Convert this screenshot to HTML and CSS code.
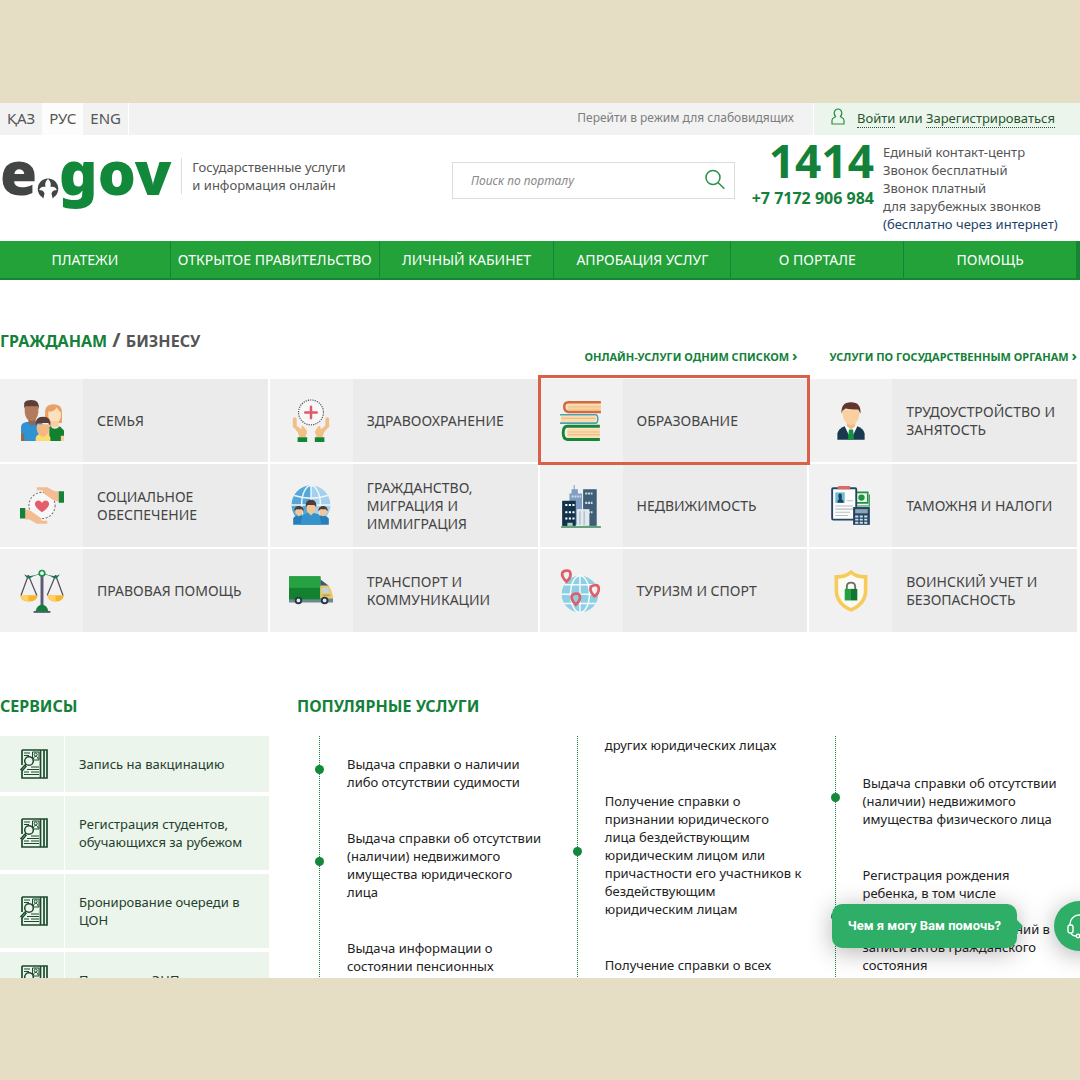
FILE: index.html
```html
<!DOCTYPE html>
<html lang="ru">
<head>
    <meta charset="UTF-8">
    <meta name="viewport" content="width=device-width, initial-scale=1.0">
    <title>Электронное правительство</title>
    <link rel="stylesheet" href="styles.css">
</head>
<body>
    <!-- Общая иконка сервисов -->
    <svg class="sprite" aria-hidden="true">
        <symbol id="doc" viewBox="0 0 28 30">
            <g fill="none" stroke="#1c4a2c">
                <path d="M2 1h25v28H2V22M2 16V1M20.500 1v28M24 1v28" stroke-width="1.700"/>
                <path d="M4 4h6M4 6.500h5M12.500 3h6.500v8h-6.500z"/>
                <circle cx="15.700" cy="5.500" r="1.500"/>
                <path d="M13.500 10c0-3.500 4.500-3.500 4.500 0"/>
                <circle cx="9" cy="12" r="4.300" fill="#ebf5ec" stroke-width="1.500"/>
                <path d="M6 15.200L4.500 17M4.500 16.500l-3.500 4 1.500 1 3.500-4z" stroke-width="1.400"/>
                <path d="M11 18h8M7 20.500h12M4 23h5m2 0h8M4 25.500h15" stroke-width="1.200"/>
            </g>
        </symbol>
    </svg>

    <div class="page">
        <!-- Верхняя панель -->
        <div class="topbar">
            <nav class="langs">
                <a href="#">ҚАЗ</a>
                <a href="#" class="active">РУС</a>
                <a href="#">ENG</a>
            </nav>
            <a href="#" class="special">Перейти в режим для слабовидящих</a>
            <div class="login">
                <svg width="14" height="17" viewBox="0 0 14 17" fill="none" stroke="#2b8f47" stroke-width="1.200">
                    <path d="M4.600 8.300C2.500 7 2.500 1 7 1s4.500 6 2.400 7.300c0 1.300 3.600 1.400 3.600 4V16H1v-3.700c0-2.600 3.600-2.700 3.600-4z"/>
                </svg>
                <span><a href="#">Войти</a> или <a href="#">Зарегистрироваться</a></span>
            </div>
        </div>

        <!-- Шапка -->
        <header class="header">
            <a href="#" class="logo">
                <span class="logo-e">e</span>
                <svg width="22" height="24" viewBox="0 0 22 24">
                    <path d="M5.500 21.500A10.300 10.300 0 1 1 16.500 21.500L15 23l-1.500-4-2.500-1-2.500 1L7 23z" fill="#414644"/>
                    <path d="M11 3c3 3 3 5 2.500 8 3-1 5 0 6.500 3-3 0-5 1-5.500 3.500L16 24H6l1.500-6.500C7 15 5 14 2 14c1.500-3 3.500-4 6.500-3C8 8 8 6 11 3z" fill="#fff"/>
                </svg>
                <span class="logo-gov">gov</span>
            </a>
            <p class="tagline">Государственные услуги<br>и информация онлайн</p>
            <form class="search">
                <input type="text" placeholder="Поиск по порталу" aria-label="Поиск по порталу">
                <button type="button" aria-label="Найти">
                    <svg width="20" height="21" viewBox="0 0 20 21" fill="none" stroke="#2b8f47" stroke-width="1.500">
                        <circle cx="8" cy="8.500" r="7"/>
                        <path d="M13 13.500l6.300 6.300"/>
                    </svg>
                </button>
            </form>
            <div class="phones">
                <strong class="short">1414</strong>
                <strong class="long">+7 7172 906 984</strong>
            </div>
            <p class="contacts">
                Единый контакт-центр<br>
                Звонок бесплатный<br>
                Звонок платный<br>
                для зарубежных звонков<br>
                <a href="#">(бесплатно через интернет)</a>
            </p>
        </header>

        <!-- Меню -->
        <nav class="menu">
            <a href="#">ПЛАТЕЖИ</a>
            <a href="#">ОТКРЫТОЕ ПРАВИТЕЛЬСТВО</a>
            <a href="#">ЛИЧНЫЙ КАБИНЕТ</a>
            <a href="#">АПРОБАЦИЯ УСЛУГ</a>
            <a href="#">О ПОРТАЛЕ</a>
            <a href="#">ПОМОЩЬ</a>
        </nav>

        <!-- Категории услуг -->
        <section class="categories">
            <div class="section-head">
                <h2><a href="#" class="current">ГРАЖДАНАМ</a> <span class="slash">/</span> <a href="#">БИЗНЕСУ</a></h2>
                <div class="links">
                    <a href="#">ОНЛАЙН-УСЛУГИ ОДНИМ СПИСКОМ <span class="arrow">›</span></a>
                    <a href="#">УСЛУГИ ПО ГОСУДАРСТВЕННЫМ ОРГАНАМ <span class="arrow">›</span></a>
                </div>
            </div>
            <div class="tiles">
                <a href="#" class="tile">
                    <span class="icon">
                        <svg viewBox="0 0 42 42">
                            <path d="M1 40V27q0-4 5-5h12q5 1 5 5v13z" fill="#2f92d3"/>
                            <path d="M1 33h3v7H1zM8 17h7v6q-3.500 4-7 0z" fill="#96664b"/>
                            <path d="M4.500 6h13v7q-1 8-6.500 8t-6.500-8z" fill="#b27b5b"/>
                            <path d="M4 9V4q1-3 7-3 8 0 7 9l-1-3H5z" fill="#5d3f38"/>
                            <path d="M24 20V11q1-6 8-6t8 6v12H26z" fill="#e8a067"/>
                            <path d="M27 12q6 0 8-4 2 3 4 5v4q-1 6-6 6t-6-6z" fill="#fde0bd"/>
                            <path d="M29 21h8v6h-8z" fill="#f8cfa2"/>
                            <path d="M25 40V28l4-2q4 5 9 0l4 4v10z" fill="#138030"/>
                            <path d="M25 28h3v12h-4zM39 35h3v5h-3z" fill="#f8cfa2"/>
                            <path d="M15 40v-3q1-3 5-4h4q4 1 5 4v3z" fill="#fbdc6e"/>
                            <path d="M16 24h12v5q-1 6-6 7-5-1-6-7z" fill="#f3b886"/>
                            <path d="M15 26v-4q1-5 7-5t7 5v4l-2-3H17z" fill="#5d3f38"/>
                        </svg>
                    </span>
                    <span class="name">СЕМЬЯ</span>
                </a>
                <a href="#" class="tile">
                    <span class="icon">
                        <svg viewBox="0 0 42 46">
                            <circle cx="21" cy="14" r="13" fill="#f7f7f7" stroke="#444" stroke-width="1.200" stroke-dasharray="1.200 1.200"/>
                            <path d="M21 8v12M15 14h12" stroke="#e0596a" stroke-width="2.600" stroke-linecap="round"/>
                            <path d="M2 21q0-2 2-2t2 2v7l5 4v-3q2-2 4 2 3 3 1 6l-1 3H9q-1-6-7-11z" fill="#f3bd86"/>
                            <path d="M40 21q0-2-2-2t-2 2v7l-5 4v-3q-2-2-4 2-3 3-1 6l1 3h6q1-6 7-11z" fill="#f3bd86"/>
                            <path d="M7 40h10v5H7zM25 40h10v5H25z" fill="#148632"/>
                        </svg>
                    </span>
                    <span class="name">ЗДРАВООХРАНЕНИЕ</span>
                </a>
                <a href="#" class="tile highlighted">
                    <span class="icon">
                        <svg viewBox="0 0 42 42">
                            <path d="M8 4h32v8H8q-2-4 0-8z" fill="#fbdcae"/>
                            <path d="M9 7.500h31M9 9.700h31" stroke="#eebd87"/>
                            <path d="M40 3H9q-4 0-4 4.500T9 12.500h31" fill="none" stroke="#d4693f" stroke-width="2.400"/>
                            <path d="M2 16h33v6H2z" fill="#fbdcae"/>
                            <path d="M2 18.500h33" stroke="#eebd87"/>
                            <path d="M1 15h34q2 0 2 4t-2 4H1" fill="none" stroke="#4f9fa4" stroke-width="1.500"/>
                            <path d="M8 28h31v9H8z" fill="#fbdcae"/>
                            <path d="M8 31.500h31M8 34h31" stroke="#eebd87"/>
                            <path d="M39 26H8q-4 0-4 6.300t4 6.300h31" fill="none" stroke="#188438" stroke-width="2.800"/>
                        </svg>
                    </span>
                    <span class="name">ОБРАЗОВАНИЕ</span>
                </a>
                <a href="#" class="tile">
                    <span class="icon">
                        <svg viewBox="0 0 42 42">
                            <path d="M8 39v-6q1-5 7-7h12q6 2 7 7v6z" fill="#193950"/>
                            <path d="M15 26l6 13 6-13-3-2h-6z" fill="#fff"/>
                            <path d="M19 29h4l1 10h-6z" fill="#139040"/>
                            <path d="M17 20h8v6l-4 3-4-3z" fill="#efb986"/>
                            <path d="M13 10h16v5q-1 8-8 10-7-2-8-10z" fill="#fbd0a1"/>
                            <path d="M12 14q-1-11 9-11t9 11l-2-4q-8 0-12-1l-3 2z" fill="#63352f"/>
                        </svg>
                    </span>
                    <span class="name">ТРУДОУСТРОЙСТВО И ЗАНЯТОСТЬ</span>
                </a>
                <a href="#" class="tile">
                    <span class="icon">
                        <svg viewBox="0 0 42 42">
                            <circle cx="21" cy="20.500" r="12.500" fill="#f7f7f7" stroke="#777" stroke-dasharray="2 1.500"/>
                            <path d="M16 3h10l7 4h4v10q-5-1-7-3l-6-4-3-4h-5z" fill="#f3bd91"/>
                            <path d="M26 38H16l-7-4H5V24q5 1 7 3l6 4 3 4h5z" fill="#f3bd91"/>
                            <path d="M37 7h5v11h-5zM0 23h5v10H0z" fill="#148238"/>
                            <path d="M21 27q-9-6-6-10 3-3 6 1 3-4 6-1 3 4-6 10z" fill="#e35d6a"/>
                        </svg>
                    </span>
                    <span class="name">СОЦИАЛЬНОЕ ОБЕСПЕЧЕНИЕ</span>
                </a>
                <a href="#" class="tile">
                    <span class="icon">
                        <svg viewBox="0 0 42 42">
                            <circle cx="21" cy="20" r="18.500" fill="#a3d0ec"/>
                            <path d="M21 1.500A18.500 18.500 0 0 0 21 38.500z" fill="#55a7d6"/>
                            <g fill="none" stroke="#eef7fc" stroke-width="1.400">
                                <path d="M21 1v38M2 20h38M5 11q16 5 32 0"/>
                                <ellipse cx="21" cy="20" rx="9" ry="18.500"/>
                            </g>
                            <path d="M4 39v-6q1-3 6-3t5 3l6-3 6 3q1-3 5-3t6 3v6z" fill="#277fba"/>
                            <path d="M11 39h20l-2-10-8-2-8 2z" fill="#3493cb"/>
                            <path d="M17 18h8v8l-4 4-4-4zM6 24h7v4l-3.500 3L6 28zM29 24h7v4l-3.500 3-3.500-3z" fill="#f6c596"/>
                            <path d="M16 22v-3q1-4 5-4t5 4v3l-2-2h-6zM5 26q0-5 4.500-5t4.500 5l-2-2H7zM28 26q0-5 4.500-5t4.500 5l-2-2h-5z" fill="#4f3d3b"/>
                        </svg>
                    </span>
                    <span class="name">ГРАЖДАНСТВО, МИГРАЦИЯ И ИММИГРАЦИЯ</span>
                </a>
                <a href="#" class="tile">
                    <span class="icon">
                        <svg viewBox="0 0 42 42">
                            <path d="M14 1h1v4h3v4h4v30H10V9h2V5h2z" fill="#7e9fc2"/>
                            <path d="M23 5h13v35H23z" fill="#405f77"/>
                            <path d="M3 16h13v24H3z" fill="#12314b"/>
                            <path d="M25 9h7M25 18h7M25 27h7M12 12h9" stroke="#c5dae8" stroke-width="2" stroke-dasharray="2 .7"/>
                            <path d="M6 20h9M6 27h9M6 33h9" stroke="#fff" stroke-width="2" stroke-dasharray="2 1.400"/>
                            <path d="M17 24h12v16H17z" fill="#e3e8ed"/>
                            <path d="M20 26v13M24 26v13" stroke="#9fb3c2"/>
                            <path d="M8 37h5v3H8z" fill="#a9d6c3"/>
                            <path d="M2 41h38" stroke="#348659" stroke-width="1.500"/>
                        </svg>
                    </span>
                    <span class="name">НЕДВИЖИМОСТЬ</span>
                </a>
                <a href="#" class="tile">
                    <span class="icon">
                        <svg viewBox="0 0 42 42">
                            <path d="M25 8h12v10H25z" fill="#e7f5e8" stroke="#209044" stroke-width="1.500"/>
                            <circle cx="31" cy="13" r="3" fill="#209044"/>
                            <path d="M38.500 10v11H27" fill="none" stroke="#209044"/>
                            <rect x="3" y="4" width="23" height="30" rx="1" fill="#fcfcfc" stroke="#244563" stroke-width="1.800"/>
                            <path d="M9 2h11v3H8z" fill="#de6862"/>
                            <path d="M6 8h9v10H6z" fill="#6cbbd9"/>
                            <path d="M8 18q0-3 1.500-3.500Q8 9 10.500 9t1.500 5.500q2 .5 2 3.500z" fill="#17435d"/>
                            <path d="M17 16h6M6 21h17M6 24h17M6 27h14M6 30h12" stroke="#b6bec6"/>
                            <rect x="23" y="22" width="16" height="17" fill="#244563"/>
                            <path d="M25 24h12v4H25z" fill="#8fa5b5"/>
                            <path d="M25 31h12M25 34h12M25 37h12" stroke="#cfdde8" stroke-width="1.800" stroke-dasharray="3 1.300"/>
                        </svg>
                    </span>
                    <span class="name">ТАМОЖНЯ И НАЛОГИ</span>
                </a>
                <a href="#" class="tile">
                    <span class="icon">
                        <svg viewBox="0 0 42 42">
                            <path d="M0 25h17q-1 6-8.500 6T0 25zM26 25h16q-1 6-8 6t-8-6z" fill="#f7b52c"/>
                            <path d="M0 25h8v6Q1 30 0 25zM26 25h8v6q-7-1-8-6z" fill="#ffd166"/>
                            <path d="M8 6L1 25M8 6l8 19M34 6l-8 19M34 6l7 19" stroke="#55505f" stroke-width="1.200"/>
                            <path d="M21 4v34" stroke="#5a5a78" stroke-width="2.800"/>
                            <path d="M4 5q6 4 15-1h4q9 5 15 1-3 5-5 4-7-4-12-4T9 9Q7 10 4 5z" fill="#23705a"/>
                            <circle cx="21" cy="4" r="2.600" fill="#fff" stroke="#159447" stroke-width="1.600"/>
                            <path d="M15 40q1-5 6-6 5 1 6 6z" fill="#137d3a"/>
                            <path d="M13 41h16" stroke="#2f4352" stroke-width="1.500"/>
                        </svg>
                    </span>
                    <span class="name">ПРАВОВАЯ ПОМОЩЬ</span>
                </a>
                <a href="#" class="tile">
                    <span class="icon">
                        <svg viewBox="0 0 42 42">
                            <path d="M0 28h42v4H0z" fill="#6e8991"/>
                            <path d="M0 7h30v22H0z" fill="#13812f"/>
                            <path d="M0 7h30v11H0z" fill="#26a243"/>
                            <path d="M30 10l8 6h-8z" fill="#3d5c66"/>
                            <path d="M30 16h8q3 4 4 10v2H30z" fill="#edc766"/>
                            <path d="M32 18h5l2 5h-7z" fill="#b9d5df"/>
                            <path d="M32 25h7" stroke="#b18e38"/>
                            <circle cx="9" cy="30" r="2.700" fill="#dfe8eb" stroke="#263746" stroke-width="1.800"/>
                            <circle cx="34" cy="30" r="2.700" fill="#dfe8eb" stroke="#263746" stroke-width="1.800"/>
                        </svg>
                    </span>
                    <span class="name">ТРАНСПОРТ И КОММУНИКАЦИИ</span>
                </a>
                <a href="#" class="tile">
                    <span class="icon">
                        <svg viewBox="0 0 42 42">
                            <circle cx="20" cy="24" r="17.500" fill="#8fcfe3"/>
                            <g fill="none" stroke="#f3fbfd" stroke-width="1.400">
                                <path d="M20 6v36M2 24h36M5 15h30M5 33h30"/>
                                <ellipse cx="20" cy="24" rx="9" ry="17.500"/>
                            </g>
                            <g fill="#f1f1f1" stroke="#dc5f69" stroke-width="2.600">
                                <path d="M7 12Q3 8 3 5t4-3.500T11 5t-4 7z"/>
                                <path d="M34 26q-4-4-4-7t4-3.500 4 3.500-4 7z"/>
                                <path d="M16 34q-4-4-4-7t4-3.500 4 3.500-4 7z" fill="#8fcfe3"/>
                            </g>
                        </svg>
                    </span>
                    <span class="name">ТУРИЗМ И СПОРТ</span>
                </a>
                <a href="#" class="tile">
                    <span class="icon">
                        <svg viewBox="0 0 42 42">
                            <path d="M21 3q6 5 14 4.500V20q0 13-14 19Q7 33 7 20V7.500Q15 8 21 3z" fill="#fbfaf3" stroke="#f6cb59" stroke-width="3.400"/>
                            <path d="M17 21v-4q0-4 4-4t4 4v4" fill="none" stroke="#676f6b" stroke-width="1.800"/>
                            <path d="M15 19h6v11h-6z" fill="#22a046"/>
                            <path d="M21 19h6v11h-6z" fill="#12752e"/>
                        </svg>
                    </span>
                    <span class="name">ВОИНСКИЙ УЧЕТ И БЕЗОПАСНОСТЬ</span>
                </a>
            </div>
        </section>

        <!-- Сервисы и популярные услуги -->
        <div class="bottom">
            <aside class="services">
                <h2>СЕРВИСЫ</h2>
                <a href="#" class="service">
                    <span class="service-icon"><svg><use href="#doc"/></svg></span>
                    <span class="service-name">Запись на вакцинацию</span>
                </a>
                <a href="#" class="service">
                    <span class="service-icon"><svg><use href="#doc"/></svg></span>
                    <span class="service-name">Регистрация студентов, обучающихся за рубежом</span>
                </a>
                <a href="#" class="service">
                    <span class="service-icon"><svg><use href="#doc"/></svg></span>
                    <span class="service-name">Бронирование очереди в ЦОН</span>
                </a>
                <a href="#" class="service">
                    <span class="service-icon"><svg><use href="#doc"/></svg></span>
                    <span class="service-name">Получение ЭЦП</span>
                </a>
            </aside>
            <section class="popular">
                <h2>ПОПУЛЯРНЫЕ УСЛУГИ</h2>
                <div class="columns">
                    <ul class="first">
                        <li><a href="#">Выдача справки о наличии<br>либо отсутствии судимости</a></li>
                        <li><a href="#">Выдача справки об отсутствии<br>(наличии) недвижимого<br>имущества юридического<br>лица</a></li>
                        <li class="continued"><a href="#">Выдача информации о<br>состоянии пенсионных</a></li>
                    </ul>
                    <ul class="second">
                        <li class="continued"><a href="#">других юридических лицах</a></li>
                        <li><a href="#">Получение справки о<br>признании юридического<br>лица бездействующим<br>юридическим лицом или<br>причастности его участников к<br>бездействующим<br>юридическим лицам</a></li>
                        <li class="continued"><a href="#">Получение справки о всех</a></li>
                    </ul>
                    <ul class="third">
                        <li><a href="#">Выдача справки об отсутствии<br>(наличии) недвижимого<br>имущества физического лица</a></li>
                        <li><a href="#">Регистрация рождения<br>ребенка, в том числе<br>внесение изменений,<br>дополнений и исправлений в<br>записи актов гражданского<br>состояния</a></li>
                    </ul>
                </div>
            </section>
        </div>

        <!-- Чат -->
        <button type="button" class="chat-text">Чем я могу Вам помочь?</button>
        <button type="button" class="chat-button" aria-label="Открыть чат">
            <svg width="24" height="26" viewBox="0 0 24 26" fill="none" stroke="#fff" stroke-width="1.400">
                <path d="M3 13V11a9 9 0 0 1 18 0v2"/>
                <rect x="1" y="12" width="5" height="8" rx="2"/>
                <rect x="18" y="12" width="5" height="8" rx="2"/>
                <path d="M4 20q1 3 5 3"/>
                <circle cx="11" cy="23" r="1.700"/>
            </svg>
        </button>
    </div>
</body>
</html>
```
FILE: styles.css
```css
* {
    box-sizing: border-box;
}
body {
    height: 100vh;
    margin: 0;
    padding: 103px 0 102px;
    background-color: #e6dec4;
    font-family: "Noto Sans", sans-serif;
    font-size: 13px;
    line-height: 18px;
    color: #333;
}
a {
    color: inherit;
    text-decoration: none;
}
h2, p, ul {
    margin: 0;
    padding: 0;
}
h2 {
    font-size: 16px;
    line-height: 20px;
    color: #14813a;
}
.sprite {
    display: none;
}
.page {
    position: relative;
    display: flex;
    flex-direction: column;
    height: 100%;
    overflow: hidden;
    background-color: #fff;
}

/* Верхняя панель */
.topbar {
    display: flex;
    align-items: stretch;
    flex-shrink: 0;
    height: 32px;
    background-color: #f2f2f2;
    line-height: 30px;
}
.langs {
    display: flex;
    margin-right: auto;
    border-right: 1px solid #fff;
    font-size: 15px;
    color: #555;
}
.langs a {
    padding: 0 7px;
}
.langs .active {
    background-color: #fcfcfc;
}
.special {
    padding-right: 19px;
    font-size: 12px;
    color: #7d7d7d;
}
.login {
    display: flex;
    align-items: flex-start;
    gap: 12px;
    width: 267px;
    padding-left: 17px;
    border-left: 1px solid #fff;
    background-color: #ecf5ec;
    color: #24562f;
}
.login svg {
    margin-top: 5px;
}
.login a {
    border-bottom: 1px dotted #24562f;
}

/* Шапка */
.header {
    display: flex;
    align-items: flex-start;
    flex-shrink: 0;
    height: 106px;
}
.logo {
    display: flex;
    margin-top: 5px;
    font-size: 60px;
    font-weight: 900;
    line-height: 64px;
}
.logo svg {
    margin-top: 36px;
}
.logo-e {
    color: #414644;
}
.logo-gov {
    color: #12883a;
}
.tagline {
    margin: 23px 0 0 10px;
    padding-left: 10px;
    border-left: 1px solid #ddd;
    color: #555;
}
.search {
    display: flex;
    width: 283px;
    height: 37px;
    margin: 27px 15px 0 auto;
    border: 1px solid #ddd;
}
.search input {
    flex: 1;
    min-width: 0;
    padding: 0 18px;
    border: 0;
    font-family: inherit;
    font-size: 12px;
    font-style: italic;
}
.search input::placeholder {
    color: #888;
}
.search button {
    padding: 0 9px;
    border: 0;
    background: none;
}
.phones {
    display: flex;
    flex-direction: column;
    align-items: flex-end;
    width: 124px;
    margin-right: 9px;
    padding-top: 6px;
    color: #14813a;
}
.short {
    font-size: 46px;
    line-height: 38px;
}
.long {
    margin-top: 10px;
    font-size: 16px;
    white-space: nowrap;
}
.contacts {
    width: 197px;
    padding-top: 8px;
    color: #555;
}
.contacts a {
    color: #1d4268;
}

/* Меню */
.menu {
    display: grid;
    grid-template-columns: 171fr 209fr 175fr 177fr 173fr 173fr;
    flex-shrink: 0;
    padding-right: 3px;
    border-bottom: 2px solid #148535;
    background-color: #148535;
    font-size: 14px;
    line-height: 37px;
    text-align: center;
    color: #fff;
}
.menu a {
    border-right: 1px solid #148535;
    background-color: #22a238;
    white-space: nowrap;
}

/* Категории услуг */
.categories {
    flex-shrink: 0;
    padding: 50px 3px 0 0;
}
.section-head {
    display: flex;
    justify-content: space-between;
    height: 49px;
}
.section-head h2 {
    color: #555;
}
.section-head .current {
    color: #14813a;
}
.slash {
    padding: 0 1px;
    font-size: 20px;
}
.links {
    display: flex;
    gap: 32px;
    padding-top: 18px;
    font-size: 11px;
    font-weight: 700;
    color: #14813a;
}
.arrow {
    font-size: 15px;
    line-height: 12px;
}
.tiles {
    display: grid;
    grid-template-columns: repeat(4, 1fr);
    grid-auto-rows: 83px;
    gap: 2px;
}
.tile {
    position: relative;
    display: flex;
    background-color: #ebebeb;
    font-size: 14px;
    color: #444;
}
.icon {
    display: flex;
    align-items: center;
    justify-content: center;
    flex-shrink: 0;
    width: 83px;
    background-color: #f1f1f1;
}
.icon svg {
    width: 44px;
    height: 44px;
}
.name {
    align-self: center;
    padding: 0 10px 0 14px;
}
.highlighted::after {
    content: "";
    position: absolute;
    inset: -4px -3px -3px -2px;
    border: 3px solid #d9614a;
    z-index: 1;
}

/* Сервисы */
.bottom {
    display: flex;
    gap: 28px;
    flex: 1;
    min-height: 0;
    padding-top: 64px;
}
.bottom h2 {
    margin-bottom: 20px;
}
.services {
    flex-shrink: 0;
    width: 269px;
}
.service {
    display: flex;
    margin-bottom: 4px;
    background-color: #ebf5ec;
    color: #24402c;
}
.service-icon {
    display: flex;
    align-items: center;
    width: 65px;
    padding-left: 20px;
    border-right: 1px solid #fff;
}
.service-icon svg {
    width: 28px;
    height: 30px;
}
.service-name {
    flex: 1;
    padding: 19px 14px;
}

/* Популярные услуги */
.popular {
    display: flex;
    flex-direction: column;
    flex: 1;
}
.columns {
    display: grid;
    grid-template-columns: 21fr 21fr 20fr;
    flex: 1;
    min-height: 0;
    padding-left: 22px;
}
.columns ul {
    border-left: 1px dotted #14813a;
    list-style: none;
    white-space: nowrap;
    color: #222;
}
.columns li {
    position: relative;
    margin-bottom: 38px;
    padding-left: 27px;
}
.columns li::before {
    content: "";
    position: absolute;
    top: calc(50% - 8px);
    left: -5px;
    width: 9px;
    height: 9px;
    border-radius: 50%;
    background-color: #14883a;
}
.columns .continued::before {
    display: none;
}
.columns .first {
    padding-top: 19px;
}
.columns .third {
    padding-top: 38px;
}

/* Чат */
.chat-text, .chat-button {
    position: absolute;
    border: 0;
    background-color: #2fae68;
    box-shadow: 0 4px 24px rgba(0, 0, 0, 0.3);
}
.chat-text {
    right: 63px;
    bottom: 30px;
    padding: 13px 16px;
    border-radius: 10px;
    font-family: Roboto, sans-serif;
    font-size: 13px;
    font-weight: 700;
    line-height: 18px;
    color: #fff;
}
.chat-text::after {
    content: "";
    position: absolute;
    top: 15px;
    right: -6px;
    border: 7px solid transparent;
    border-left-color: #2fae68;
    border-right: 0;
}
.chat-button {
    right: -24px;
    bottom: 27px;
    width: 50px;
    height: 50px;
    padding: 0;
    border-radius: 50%;
}
.chat-button svg {
    display: block;
    margin: 0 auto;
}
```
